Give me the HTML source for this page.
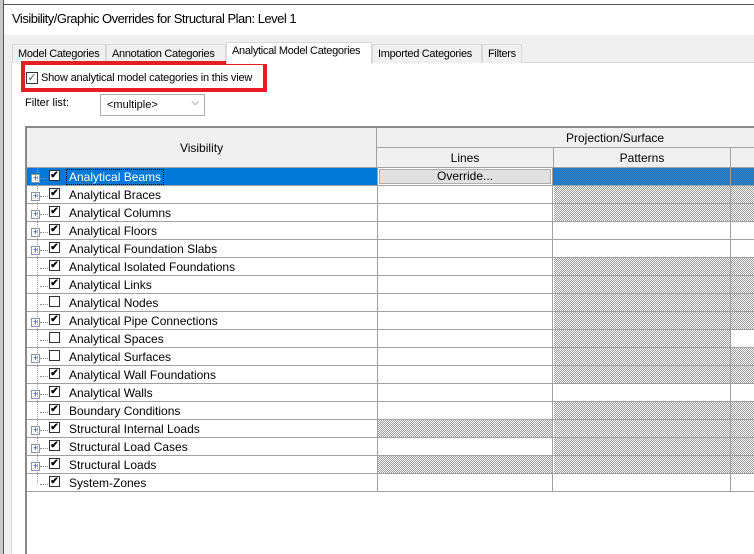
<!DOCTYPE html>
<html><head><meta charset="utf-8"><style>
*{margin:0;padding:0;box-sizing:border-box}
body{width:754px;height:554px;overflow:hidden;background:#fff;font-family:"Liberation Sans",sans-serif;font-size:12px;color:#000;position:relative}
.a{position:absolute}
.h{background:repeating-conic-gradient(#9a9a9a 0 25%,#fff 0 50%) 0 0/2px 2px}
.hb{background:repeating-conic-gradient(#4a7fae 0 25%,#0078d7 0 50%) 0 0/2px 2px}
.tab{position:absolute;top:44px;height:19px;border:1px solid #d9d9d9;border-bottom:none;background:#f0f0f0;font-size:11px;letter-spacing:-0.3px;padding:3px 0 0 5px;white-space:nowrap}
.row{position:absolute;left:27px;width:727px;height:18px;border-bottom:1px solid #a0a0a0}
.cb{position:absolute;left:22px;top:2px;width:11px;height:11px;border:1px solid #333;background:#fff;font-size:10px;line-height:9px;text-align:center;font-weight:bold}
.pl{position:absolute;left:4px;top:6px;width:9px;height:9px;border:1px solid #8a94a6;background:#fff;color:#1c3f95;font-size:9px;line-height:7px;text-align:center}
.dt{position:absolute;left:13px;top:10px;width:8px;border-top:1px dotted #888}
.tx{position:absolute;left:42px;top:2px;font-size:12px;white-space:nowrap}
.c{position:absolute;top:0;height:17px}
</style></head><body>
<div class="a" style="left:0;top:0;width:4px;height:554px;background:#c8c8c8"></div>
<div class="a" style="left:3px;top:0;width:1px;height:554px;background:#555"></div>
<div class="a" style="left:3px;top:4px;width:751px;height:1px;background:#555"></div>
<div class="a" style="left:12px;top:11px;font-size:13px;letter-spacing:-0.5px">Visibility/Graphic Overrides for Structural Plan: Level 1</div>
<div class="a" style="left:4px;top:35px;width:750px;height:519px;background:#f0f0f0"></div>
<div class="a" style="left:11px;top:62px;width:743px;height:492px;background:#fff;border-top:1px solid #d9d9d9;border-left:1px solid #d9d9d9"></div>
<div class="tab" style="left:12px;width:94px">Model Categories</div>
<div class="tab" style="left:106px;width:120px">Annotation Categories</div>
<div class="tab" style="left:226px;top:42px;height:22px;width:146px;background:#fff;z-index:2;padding-top:2px">Analytical Model Categories</div>
<div class="tab" style="left:372px;width:110px">Imported Categories</div>
<div class="tab" style="left:482px;width:40px">Filters</div>
<div class="a" style="left:21px;top:61px;width:246px;height:31px;border:4px solid #e81c24"></div>
<div class="a" style="left:26px;top:72px;width:12px;height:12px;border:1px solid #333;background:#fff;color:#555;font-size:11px;line-height:10px;text-align:center">✓</div>
<div class="a" style="left:41px;top:72px;font-size:11px;letter-spacing:-0.2px">Show analytical model categories in this view</div>
<div class="a" style="left:25px;top:97px;font-size:11px">Filter list:</div>
<div class="a" style="left:100px;top:94px;width:105px;height:22px;border:1px solid #adadad;background:#fff;padding:4px 0 0 6px;font-size:11px">&lt;multiple&gt;<span style="position:absolute;right:5px;top:2px;color:#555;font-size:10px">⌵</span></div>
<div class="a" style="left:25px;top:126px;width:729px;height:428px;border-left:2px solid #8a8a8a;border-top:2px solid #8a8a8a;background:#fff"></div>
<div class="a" style="left:27px;top:128px;width:350px;height:40px;background:#f0f0f0;border-right:1px solid #a0a0a0;border-bottom:1px solid #a0a0a0;text-align:center;padding-top:13px">Visibility</div>
<div class="a" style="left:377px;top:128px;width:377px;height:20px;background:#f0f0f0;border-bottom:1px solid #a0a0a0;padding:3px 0 0 189px">Projection/Surface</div>
<div class="a" style="left:377px;top:148px;width:177px;height:20px;background:#f0f0f0;border-bottom:1px solid #a0a0a0;border-right:1px solid #a0a0a0;text-align:center;padding-top:3px">Lines</div>
<div class="a" style="left:554px;top:148px;width:177px;height:20px;background:#f0f0f0;border-bottom:1px solid #a0a0a0;border-right:1px solid #a0a0a0;text-align:center;padding-top:3px">Patterns</div>
<div class="a" style="left:731px;top:148px;width:23px;height:20px;background:#f0f0f0;border-bottom:1px solid #a0a0a0"></div>
<div id="rows"></div>
<div class="a" style="left:37px;top:168px;width:0;height:315px;border-left:1px dotted #999"></div>
<script>
var R=[["Analytical Beams",1,1,"o","b","b"],["Analytical Braces",1,1,0,1,1],["Analytical Columns",1,1,0,1,1],["Analytical Floors",1,1,0,0,0],["Analytical Foundation Slabs",1,1,0,0,0],["Analytical Isolated Foundations",0,1,0,1,1],["Analytical Links",0,1,0,1,1],["Analytical Nodes",0,0,0,1,1],["Analytical Pipe Connections",1,1,0,1,1],["Analytical Spaces",0,0,0,1,0],["Analytical Surfaces",1,0,0,1,1],["Analytical Wall Foundations",0,1,0,1,1],["Analytical Walls",1,1,0,0,0],["Boundary Conditions",0,1,0,1,1],["Structural Internal Loads",1,1,1,1,1],["Structural Load Cases",1,1,0,1,1],["Structural Loads",1,1,1,1,1],["System-Zones",0,1,0,0,0]];
var h="";R.forEach(function(r,i){var y=168+i*18,s=i==0;
h+='<div class="row" style="top:'+y+'px;'+(s?'background:#0078d7;':'')+'">';
if(r[1])h+='<div class="pl">+</div>';
h+='<div class="dt"></div><div class="cb">'+(r[2]?'✔':'')+'</div>';
h+='<div class="tx" style="'+(s?'color:#fff;outline:1px dotted #000;padding:0 2px;left:40px':'')+'">'+r[0]+'</div>';
h+='<div class="c '+(r[3]==1?'h':'')+'" style="left:350px;width:176px;border-left:1px solid #a0a0a0;border-right:1px solid #a0a0a0;'+(r[3]=="o"?'background:#fff;':'')+'">'+(r[3]=="o"?'<div style="margin:1px;height:15px;background:#e1e1e1;border:1px solid #adadad;text-align:center;line-height:13px">Override...</div>':'')+'</div>';
h+='<div class="c '+(r[4]=="b"?'hb':r[4]?'h':'')+'" style="left:527px;width:177px;border-right:1px solid #a0a0a0"></div>';
h+='<div class="c '+(r[5]=="b"?'hb':r[5]?'h':'')+'" style="left:704px;width:23px"></div></div>';});
document.getElementById("rows").innerHTML=h;
</script>
</body></html>
